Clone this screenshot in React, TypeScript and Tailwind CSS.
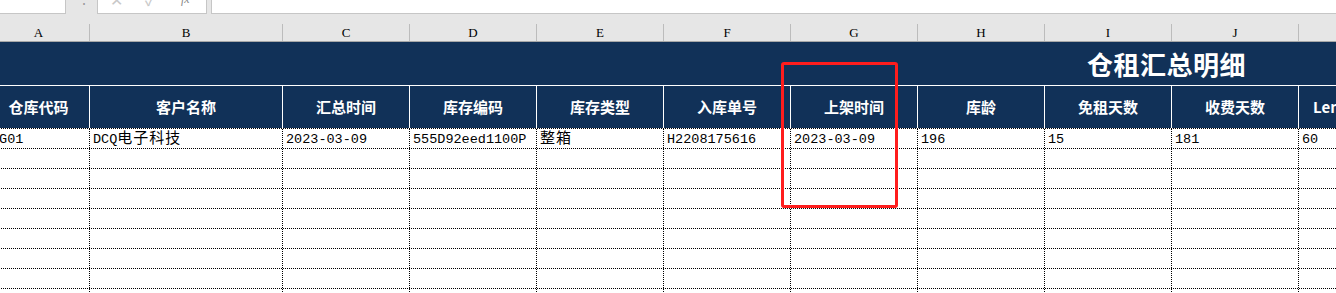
import React from "react";

const cols = [
  { key: "A", w: "w-[102px]", head: "仓库代码", val: "CG01" },
  { key: "B", w: "w-[193px]", head: "客户名称", val: "DCQ电子科技" },
  { key: "C", w: "w-[127px]", head: "汇总时间", val: "2023-03-09" },
  { key: "D", w: "w-[127px]", head: "库存编码", val: "555D92eed1100P" },
  { key: "E", w: "w-[127px]", head: "库存类型", val: "整箱" },
  { key: "F", w: "w-[127px]", head: "入库单号", val: "H2208175616" },
  { key: "G", w: "w-[127px]", head: "上架时间", val: "2023-03-09" },
  { key: "H", w: "w-[127px]", head: "库龄", val: "196" },
  { key: "I", w: "w-[127px]", head: "免租天数", val: "15" },
  { key: "J", w: "w-[127px]", head: "收费天数", val: "181" },
  { key: "K", w: "w-[140px]", head: "Length", val: "60" },
];

const mono = { fontFamily: '"Liberation Mono", "Noto Sans CJK SC", monospace' };
const cjk = { fontFamily: '"Noto Sans CJK SC", "Liberation Sans", sans-serif' };

function Val({ text }: { text: string }) {
  const parts = text.split(/([\u4e00-\u9fff]+)/).filter(Boolean);
  return (
    <span className="whitespace-nowrap text-[13.5px] leading-[15px] text-black" style={mono}>
      {parts.map((p, i) =>
        /[\u4e00-\u9fff]/.test(p) ? (
          <span key={i} className="text-[15px] tracking-[1px]" style={cjk}>
            {p}
          </span>
        ) : (
          <span key={i}>{p}</span>
        )
      )}
    </span>
  );
}

export default function App() {
  const rows = Array.from({ length: 9 });
  return (
    <div className="relative w-[1336px] h-[293px] overflow-hidden bg-white">
      {/* formula bar */}
      <div className="flex h-[14px] bg-[#e6e6e6]">
        <div className="w-[66px] bg-white border-b border-r border-[#c6c6c6] relative overflow-hidden">
          <span className="absolute right-[8px] top-[-9px] text-[10px] text-[#777]">ˇ</span>
        </div>
        <div className="w-[31px] relative overflow-hidden">
          <span className="absolute left-[11px] top-[-8px] text-[14px] leading-[14px] text-[#999]">⋮</span>
        </div>
        <div className="w-[110px] bg-white border-b border-l border-r border-[#c6c6c6] relative overflow-hidden text-[#c8c8c8]">
          <span className="absolute left-[12px] top-[-9px] text-[16px] leading-[16px]" style={cjk}>✕</span>
          <span className="absolute left-[47px] top-[-9px] text-[16px] leading-[16px]" style={cjk}>✓</span>
          <span className="absolute left-[83px] top-[-7px] text-[12px] leading-[12px] italic text-[#888]" style={{ fontFamily: '"Liberation Serif", serif' }}>fx</span>
        </div>
        <div className="w-[4px]" />
        <div className="flex-1 bg-white border-b border-l border-[#c6c6c6]" />
      </div>

      {/* column letters */}
      <div className="flex h-[28px] bg-[#e6e6e6] border-b border-[#a8a8a8] pt-[10px] ml-[-12px]">
        {cols.map((c) => (
          <div
            key={c.key}
            className={`${c.w} shrink-0 h-[17px] border-r border-[#bcbcbc] flex items-center justify-center text-[13px] leading-[17px] text-black`}
            style={{ fontFamily: '"Liberation Serif", serif' }}
          >
            {c.key}
          </div>
        ))}
      </div>

      {/* title row */}
      <div className="h-[43px] bg-[#113158] flex items-center justify-end pr-[90px]">
        <span className="text-[26px] font-bold text-white leading-none tracking-[0.5px]" style={cjk}>
          仓租汇总明细
        </span>
      </div>

      {/* header row */}
      <div className="flex h-[43px] bg-[#113158] border-t border-white ml-[-12px]">
        {cols.map((c) => (
          <div
            key={c.key}
            className={`${c.w} shrink-0 h-full border-r border-white flex items-center ${c.key === "K" ? "justify-start pl-[14px]" : "justify-center"} overflow-hidden`}
          >
            <span className="text-[15px] font-bold text-white whitespace-nowrap" style={cjk}>
              {c.head}
            </span>
          </div>
        ))}
      </div>

      {/* data rows */}
      {rows.map((_, r) => (
        <div key={r} className="flex h-[20px] border-t border-dotted border-black ml-[-12px]">
          {cols.map((c) => (
            <div
              key={c.key}
              className={`${c.w} shrink-0 h-full border-r border-dotted border-black flex items-end pl-[3px] pb-[1px] overflow-hidden`}
            >
              {r === 0 ? <Val text={c.val} /> : null}
            </div>
          ))}
        </div>
      ))}

      {/* red highlight box */}
      <div className="absolute left-[781px] top-[62px] w-[117px] h-[146px] border-[3px] border-[#ff1d1d] rounded-[3px]" />
    </div>
  );
}
